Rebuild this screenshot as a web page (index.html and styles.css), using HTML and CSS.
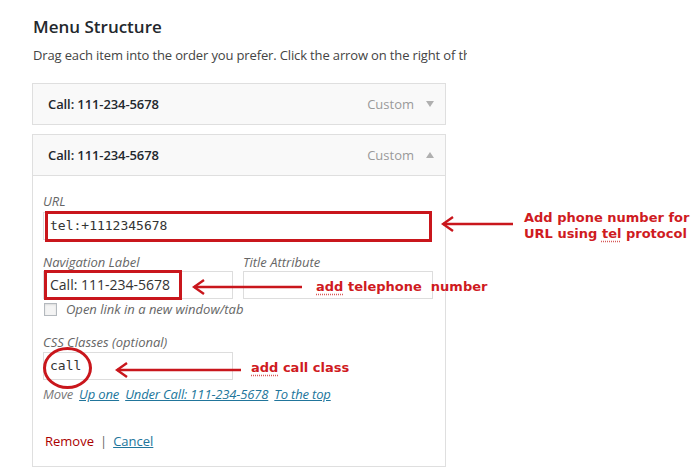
FILE: index.html
```html
<!DOCTYPE html>
<html>
<head>
<meta charset="utf-8">
<link rel="stylesheet" href="styles.css">
</head>
<body>
<div class="page">
  <h2 class="title">Menu Structure</h2>
  <p class="desc">Drag each item into the order you prefer. Click the arrow on the right of th</p>

  <div class="item">
    <div class="item-bar">
      <span class="item-title">Call: 111-234-5678</span>
      <span class="item-type">Custom</span>
      <span class="toggle down"></span>
    </div>
  </div>

  <div class="item open">
    <div class="item-bar">
      <span class="item-title">Call: 111-234-5678</span>
      <span class="item-type">Custom</span>
      <span class="toggle up"></span>
    </div>
    <div class="item-body">
      <div class="field">
        <div class="label">URL</div>
        <div class="input wide mono">tel:+1112345678</div>
      </div>
      <div class="row">
        <div class="field">
          <div class="label">Navigation Label</div>
          <div class="input half">Call: 111-234-5678</div>
        </div>
        <div class="field">
          <div class="label">Title Attribute</div>
          <div class="input half"></div>
        </div>
      </div>
      <div class="check-row">
        <span class="checkbox"></span>
        <span class="check-label">Open link in a new window/tab</span>
      </div>
      <div class="field css-field">
        <div class="label">CSS Classes (optional)</div>
        <div class="input half mono css-input">call</div>
      </div>
      <div class="move">
        <span class="move-label">Move</span>
        <a class="move-link">Up one</a>
        <a class="move-link">Under Call: 111-234-5678</a>
        <a class="move-link">To the top</a>
      </div>
      <div class="actions">
        <a class="remove">Remove</a>
        <span class="sep">|</span>
        <a class="cancel">Cancel</a>
      </div>
    </div>
  </div>

  <div class="annotations">
    <div class="hl hl-url"></div>
    <div class="hl hl-nav"></div>
    <div class="hl-circle"></div>

    <svg class="arrow arrow-url" width="80" height="20" viewBox="0 0 80 20">
      <path d="M2 10 H72" stroke="#c9161c" stroke-width="2.4" fill="none"/>
      <path d="M12 3 L2 10 L12 17" stroke="#c9161c" stroke-width="2.4" fill="none"/>
    </svg>
    <svg class="arrow arrow-nav" width="112" height="20" viewBox="0 0 112 20">
      <path d="M2 10 H110" stroke="#c9161c" stroke-width="2.4" fill="none"/>
      <path d="M12 3 L2 10 L12 17" stroke="#c9161c" stroke-width="2.4" fill="none"/>
    </svg>
    <svg class="arrow arrow-css" width="128" height="20" viewBox="0 0 128 20">
      <path d="M2 10 H126" stroke="#c9161c" stroke-width="2.4" fill="none"/>
      <path d="M12 3 L2 10 L12 17" stroke="#c9161c" stroke-width="2.4" fill="none"/>
    </svg>

    <div class="note note-url">Add phone number for<br>URL using <span class="sp">tel</span> protocol</div>
    <div class="note note-nav"><span class="sp">add</span> telephone&nbsp; number</div>
    <div class="note note-css"><span class="sp">add</span> call class</div>
  </div>
</div>
</body>
</html>
```

FILE: styles.css
```css
* { box-sizing: border-box; }

html, body {
  margin: 0;
  padding: 0;
  background: #ffffff;
}

body {
  font-family: "Open Sans", "Noto Sans", sans-serif;
  color: #444;
  width: 697px;
  height: 475px;
  overflow: hidden;
}

.page {
  position: relative;
  padding: 14px 0 0 32px;
  height: 475px;
}

.title {
  margin: 0 0 0 1px;
  font-size: 17px;
  line-height: 26px;
  font-weight: 600;
  color: #23282d;
}

.desc {
  margin: 5px 0 0 1px;
  width: 434px;
  font-size: 13px;
  line-height: 20px;
  letter-spacing: -0.14px;
  color: #444;
  white-space: nowrap;
  overflow: hidden;
}

.item {
  width: 414px;
  border: 1px solid #dfdfdf;
  margin-top: 18px;
  background: #fff;
}

.item.open {
  margin-top: 9px;
}

.item-bar {
  display: flex;
  align-items: center;
  height: 40px;
  padding: 0 11px 0 15px;
  background: #f9f9f9;
}

.item.open .item-bar {
  border-bottom: 1px solid #dfdfdf;
  height: 41px;
}

.item-title {
  flex: 1;
  font-size: 13px;
  font-weight: 600;
  color: #23282d;
  letter-spacing: -0.1px;
}

.item-type {
  font-size: 13px;
  color: #999;
  margin-right: 12px;
}

.toggle {
  width: 0;
  height: 0;
  border-left: 4px solid transparent;
  border-right: 4px solid transparent;
}
.toggle.down { border-top: 6px solid #b0b0b0; }
.toggle.up { border-bottom: 6px solid #b0b0b0; }

.item-body {
  padding: 16px 13px 15px 10px;
}

.label {
  font-size: 13px;
  line-height: 18px;
  font-style: italic;
  color: #666;
}

.input {
  height: 28px;
  border: 1px solid #dddddd;
  background: #fff;
  font-size: 14px;
  line-height: 26px;
  padding: 0 6px;
  color: #333;
  white-space: nowrap;
  overflow: hidden;
}

.input.wide { width: 389px; margin-top: 2px; }
.input.half { width: 190px; }

.input.mono {
  font-family: "DejaVu Sans Mono", "Liberation Mono", monospace;
  font-size: 13px;
}

.input.css-input { margin-top: 1px; }

.row {
  display: flex;
  gap: 10px;
  margin-top: 13px;
}

.check-row {
  display: flex;
  align-items: center;
  height: 18px;
  margin-top: 1px;
  padding-left: 1px;
}

.checkbox {
  width: 13px;
  height: 13px;
  border: 1px solid #b4b9be;
  background: #f4f4f4;
  box-shadow: inset 0 1px 2px rgba(0,0,0,0.1);
}

.check-label {
  margin-left: 9px;
  font-size: 13px;
  font-style: italic;
  color: #666;
}

.css-field {
  margin-top: 15px;
}

.move {
  display: flex;
  gap: 6px;
  margin-top: 5px;
  font-size: 13px;
  line-height: 18px;
  font-style: italic;
  letter-spacing: -0.15px;
}

.move-label { color: #777; }

.move-link {
  color: #21759b;
  text-decoration: underline;
}

.actions {
  display: flex;
  align-items: center;
  gap: 6px;
  margin-top: 28px;
  padding-left: 2px;
  font-size: 13px;
  line-height: 20px;
}

.remove { color: #a00; }
.sep { color: #666; }
.cancel { color: #21759b; text-decoration: underline; }

/* annotation overlay */
.annotations {
  position: absolute;
  left: 0;
  top: 0;
  width: 697px;
  height: 475px;
  pointer-events: none;
}

.hl {
  position: absolute;
  border: 3px solid #c9161c;
}
.hl-url { left: 45px; top: 211px; width: 387px; height: 31px; }
.hl-nav { left: 44px; top: 270px; width: 138px; height: 30px; }

.hl-circle {
  position: absolute;
  left: 43px;
  top: 347px;
  width: 49px;
  height: 42px;
  border: 3px solid #c9161c;
  border-radius: 50%;
}

.arrow { position: absolute; }
.arrow-url { left: 441px; top: 214px; }
.arrow-nav { left: 192px; top: 277px; }
.arrow-css { left: 115px; top: 360px; }

.note {
  position: absolute;
  font-family: "DejaVu Sans", Verdana, sans-serif;
  font-weight: bold;
  font-size: 13px;
  line-height: 16px;
  color: #cf1b1f;
  white-space: nowrap;
}
.note-url { left: 524px; top: 210px; }
.note-nav { left: 316px; top: 279px; }
.note-css { left: 251px; top: 360px; }

.sp {
  text-decoration: underline dotted #d65a5a;
  text-underline-offset: 3px;
}
```
